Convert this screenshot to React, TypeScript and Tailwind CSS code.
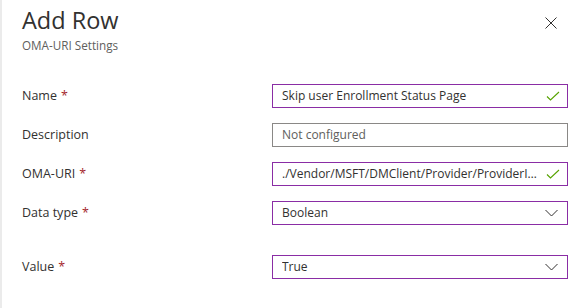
type Row = {
  label: string;
  required?: boolean;
  value: string;
  kind: 'text' | 'select';
  valid?: boolean;
  placeholder?: boolean;
};

const rows: Row[] = [
  { label: 'Name', required: true, value: 'Skip user Enrollment Status Page', kind: 'text', valid: true },
  { label: 'Description', value: 'Not configured', kind: 'text', placeholder: true },
  { label: 'OMA-URI', required: true, value: './Vendor/MSFT/DMClient/Provider/ProviderID/FirstSyncStatus/SkipUserStatusPage', kind: 'text', valid: true },
  { label: 'Data type', required: true, value: 'Boolean', kind: 'select' },
  { label: 'Value', required: true, value: 'True', kind: 'select' },
];

function Check() {
  return (
    <svg width="14" height="10" viewBox="0 0 14 10" className="shrink-0">
      <path d="M1 5.5 L4.5 9 L13 1" fill="none" stroke="#57a300" strokeWidth="1.1" />
    </svg>
  );
}

function Chevron() {
  return (
    <svg width="13" height="8" viewBox="0 0 13 8" className="shrink-0">
      <path d="M0.5 1 L6.5 7 L12.5 1" fill="none" stroke="#323130" strokeWidth="1" />
    </svg>
  );
}

function Field({ row }: { row: Row }) {
  const purple = row.valid || row.kind === 'select';
  return (
    <div
      className={`flex h-[24px] w-[296px] items-center border pl-[9px] pr-[7px] ${
        purple ? 'border-[#8a2da5]' : 'border-[#8a8886]'
      }`}
    >
      <span
        className={`min-w-0 flex-1 truncate text-[12px] leading-[22px] ${
          row.placeholder ? 'text-[#605e5c]' : 'text-[#323130]'
        }`}
      >
        {row.value}
      </span>
      {row.valid && <span className="ml-[4px]"><Check /></span>}
      {row.kind === 'select' && <span className="mr-[2px]"><Chevron /></span>}
    </div>
  );
}

export default function App() {
  return (
    <div className="h-[308px] w-[587px] border-l-2 border-[#ebebeb] bg-white pl-[20px] font-['Open_Sans',sans-serif]">
      <div className="flex items-start justify-between pr-[29px] pt-[4px]">
        <div>
          <h1 className="text-[23.5px] font-normal leading-[32px] text-[#323130]">Add Row</h1>
          <p className="mt-[1px] text-[11.7px] leading-[16px] text-[#605e5c]">OMA-URI Settings</p>
        </div>
        <button className="mt-[12px] flex h-[14px] w-[14px] items-center justify-center">
          <svg width="12" height="12" viewBox="0 0 12 12">
            <path d="M0.5 0.5 L11.5 11.5 M11.5 0.5 L0.5 11.5" stroke="#323130" strokeWidth="1" />
          </svg>
        </button>
      </div>

      <div className="mt-[31px] flex flex-col">
        {rows.map((r, i) => (
          <div key={r.label} className={`flex items-center ${i === 0 ? '' : i === 4 ? 'mt-[30px]' : 'mt-[15px]'}`}>
            <label className="w-[250px] text-[12.5px] leading-[20px] text-[#323130]">
              {r.label}
              {r.required && <span className="ml-[4px] text-[#a4262c]">*</span>}
            </label>
            <Field row={r} />
          </div>
        ))}
      </div>
    </div>
  );
}
